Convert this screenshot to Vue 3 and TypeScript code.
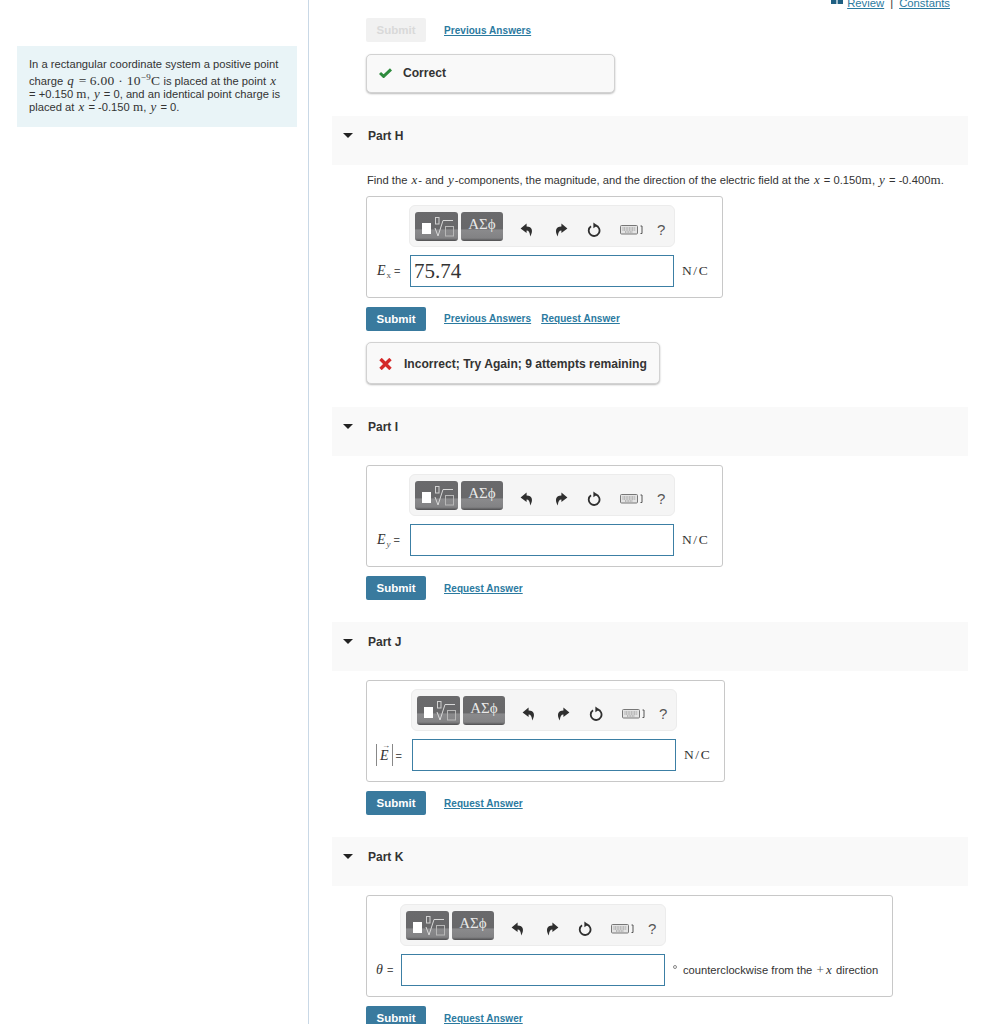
<template>
  <div class="page">
    <aside class="side">
      <div class="intro">
        <div>In a rectangular coordinate system a positive point</div>
        <div class="raised">charge <span class="mi">q</span><span class="m big eq">=</span><span class="m big">6.00 · 10<sup>−9</sup>C</span> is placed at the point <span class="mi">x</span></div>
        <div>= +0.150 <span class="m">m</span>, <span class="mi">y</span> = 0, and an identical point charge is</div>
        <div>placed at <span class="mi">x</span> = -0.150 <span class="m">m</span>, <span class="mi">y</span> = 0.</div>
      </div>
    </aside>

    <main class="main">
      <div class="top-links">
        <svg class="book" width="12" height="8" viewBox="0 0 12 8"><rect width="5.4" height="8" fill="#1f5f82" /><rect x="6.6" width="5.4" height="8" fill="#1f5f82" /></svg>
        <a class="plain">Review</a>
        <span class="sep">|</span>
        <a class="plain">Constants</a>
      </div>

      <div class="actions first">
        <button class="submit disabled">Submit</button>
        <a class="link">Previous Answers</a>
      </div>
      <div class="feedback ok">
        <svg width="13" height="10" viewBox="0 0 13 10"><path d="M1 5 L4.6 8.4 L12 1.4" fill="none" stroke="#2e8b3d" stroke-width="3" /></svg>
        <span>Correct</span>
      </div>

      <section v-for="part in parts" :key="part.name" class="part">
        <header class="part-head">
          <span class="caret"></span>
          <span class="part-name">Part {{ part.name }}</span>
        </header>

        <p v-if="part.name === 'H'" class="question">
          Find the <span class="mi">x</span>- and <span class="mi">y</span>-components, the magnitude, and the direction of the electric field at the
          <span class="mi">x</span> = 0.150<span class="m">m</span>, <span class="mi">y</span> = -0.400<span class="m">m</span>.
        </p>

        <div class="answer" :class="'kind-' + part.kind">
          <div class="toolbar">
            <div class="tool-btn">
              <svg width="43" height="29" viewBox="0 0 43 29">
                <rect x="7" y="11" width="9" height="11" fill="#fff" />
                <rect x="20.5" y="5.5" width="3.5" height="6.5" fill="none" stroke="#d0d0d0" />
                <path d="M20 16 L23 24 L28 8.5 L38 8.5" fill="none" stroke="#d8d8d8" />
                <rect x="30.5" y="14.5" width="8" height="9.5" fill="none" stroke="#b8b8b8" />
              </svg>
            </div>
            <div class="tool-btn greek">ΑΣϕ</div>
            <svg class="ico undo" width="14" height="14" viewBox="0 0 14 14"><path d="M6.6 0.5 L0.6 5.6 L6.6 10 V7.6 C8.8 7.6 9.8 9.6 10.2 13.5 C13.4 8 12.4 3.4 6.6 3.4 Z" fill="#2f2f2f" /></svg>
            <svg class="ico redo" width="14" height="14" viewBox="0 0 14 14"><path d="M7.4 0.5 L13.4 5.6 L7.4 10 V7.6 C5.2 7.6 4.2 9.6 3.8 13.5 C0.6 8 1.6 3.4 7.4 3.4 Z" fill="#2f2f2f" /></svg>
            <svg class="ico reset" width="14" height="16" viewBox="0 0 14 16"><path d="M8.6 3.4 A5.4 5.4 0 1 1 4 4.2" fill="none" stroke="#2f2f2f" stroke-width="1.8" /><path d="M6.4 0.4 L10.4 3.4 L6.4 6.2 Z" fill="#2f2f2f" /></svg>
            <svg class="ico keys" width="23" height="11" viewBox="0 0 23 11">
              <rect x="0.5" y="1.5" width="17" height="8.5" rx="1" fill="#e4e4e4" stroke="#777" />
              <path d="M2.5 4 H15.5 M2.5 6 H15.5 M5 8 H13" stroke="#8a8a8a" stroke-dasharray="1 .6" />
              <path d="M20.5 2 H22 V9.5 H20.5" fill="none" stroke="#555" />
            </svg>
            <span class="ico help">?</span>
          </div>

          <span class="label">
            <template v-if="part.kind === 'ex'"><span class="mi">E</span><sub class="sub">x</sub> =</template>
            <template v-else-if="part.kind === 'ey'"><span class="mi">E</span><sub class="sub it">y</sub> =</template>
            <template v-else-if="part.kind === 'mag'"><span class="bars"><span class="mi vec">E</span></span> =</template>
            <template v-else><span class="mi">θ</span> =</template>
          </span>
          <div class="input">{{ part.value }}</div>
          <span v-if="part.kind !== 'theta'" class="unit">N/C</span>
          <span v-else class="unit-text"><span class="deg"></span>counterclockwise from the <span class="m plus">+</span><span class="mi">x</span> direction</span>
        </div>

        <div class="actions">
          <button class="submit">Submit</button>
          <a v-if="part.previous" class="link">Previous Answers</a>
          <a class="link">Request Answer</a>
        </div>

        <div v-if="part.wrong" class="feedback bad">
          <svg width="13" height="12" viewBox="0 0 13 12"><path d="M1.5 1 L11.5 11 M11.5 1 L1.5 11" fill="none" stroke="#d42a2a" stroke-width="3.4" /></svg>
          <span>Incorrect; Try Again; 9 attempts remaining</span>
        </div>
      </section>
    </main>
  </div>
</template>

<script setup lang="ts">
interface Part {
  name: string;
  kind: 'ex' | 'ey' | 'mag' | 'theta';
  value?: string;
  previous?: boolean;
  wrong?: boolean;
}

const parts: Part[] = [
  { name: 'H', kind: 'ex', value: '75.74', previous: true, wrong: true },
  { name: 'I', kind: 'ey' },
  { name: 'J', kind: 'mag' },
  { name: 'K', kind: 'theta' },
];
</script>

<style>
html,
body {
  margin: 0;
  background: #fff;
}
</style>

<style scoped>
.page {
  display: flex;
  width: 998px;
  height: 1024px;
  overflow: hidden;
  font-family: "Liberation Sans", Arial, sans-serif;
  color: #333;
  background: #fff;
}

.side {
  box-sizing: border-box;
  flex: none;
  width: 309px;
  padding: 46px 11px 0 17px;
  border-right: 1px solid #c9d8e6;
}

.intro {
  box-sizing: border-box;
  height: 81px;
  padding: 11.5px 12px 0;
  background: #e9f4f7;
  font-size: 11.2px;
  line-height: 13px;
  white-space: nowrap;
}

.raised {
  padding-top: 4px;
}

.m {
  font-family: "Liberation Serif", "Times New Roman", serif;
  font-size: 13px;
  line-height: 0;
  letter-spacing: 0.3px;
}

.big {
  font-size: 13.5px;
}

.eq {
  margin: 0 3px 0 4px;
}

.plus {
  margin: 0 1px;
  color: #555;
}

.mi {
  margin: 0 1px;
  font-family: "Liberation Serif", "Times New Roman", serif;
  font-style: italic;
  font-size: 13px;
  line-height: 0;
}

sup {
  font-size: 9px;
  line-height: 0;
}

.sub {
  font-family: "Liberation Serif", "Times New Roman", serif;
  font-size: 9px;
  line-height: 0;
}

.it {
  font-style: italic;
}

.main {
  flex: none;
  width: 636px;
  margin-left: 23px;
}

.top-links {
  display: flex;
  justify-content: flex-end;
  align-items: center;
  gap: 4px;
  height: 6px;
  margin-bottom: 12px;
  padding-right: 18px;
  font-size: 11.3px;
  line-height: 6px;
}

.book {
  margin-top: -6px;
}

.plain {
  color: #2b7a9f;
  text-decoration: underline;
}

.sep {
  margin: 0 2px;
}

.actions {
  display: flex;
  align-items: center;
  height: 24.4px;
  margin: 8.6px 0 0 34px;
}

.actions.first {
  height: 24px;
  margin-top: 0;
}

.submit {
  box-sizing: border-box;
  width: 60px;
  height: 100%;
  margin-right: 18px;
  padding: 0;
  border: 0;
  border-radius: 2px;
  background: #397a9e;
  color: #fff;
  font: 700 11.5px "Liberation Sans", Arial, sans-serif;
}

.submit.disabled {
  background: #f1f1f1;
  color: #d9d9d9;
}

.link {
  margin-right: 10px;
  color: #2b7a9f;
  font-size: 10px;
  font-weight: 700;
  letter-spacing: 0.05px;
  text-decoration: underline;
}

.feedback {
  box-sizing: border-box;
  display: flex;
  align-items: center;
  width: fit-content;
  margin-left: 34px;
  border: 1px solid #d2d2d2;
  border-radius: 5px;
  background: #f9f9f9;
  box-shadow: 0 1px 2px #bbb;
  font-size: 12.1px;
  font-weight: 700;
}

.feedback.ok {
  gap: 11px;
  width: 249px;
  height: 39px;
  margin-top: 12px;
  margin-bottom: 23px;
  padding: 0 0 2px 12px;
}

.feedback.bad {
  gap: 12px;
  height: 42px;
  margin-top: 11px;
  margin-bottom: 1.2px;
  padding: 1px 12px 0;
}

.part {
  padding-bottom: 21.8px;
}

.part-head {
  box-sizing: border-box;
  display: flex;
  align-items: center;
  height: 48.6px;
  padding: 0 0 9px 11px;
  background: #f9f9f9;
}

.caret {
  width: 0;
  height: 0;
  margin-right: 15px;
  border-style: solid;
  border-width: 5px 5px 0;
  border-color: #222 transparent transparent;
}

.part-name {
  font-size: 12px;
  font-weight: 700;
}

.question {
  height: 14px;
  margin: 8px 0 0 35px;
  font-size: 11.2px;
  line-height: 14px;
  white-space: nowrap;
}

.answer {
  box-sizing: border-box;
  display: grid;
  grid-template-columns: 27px 264px auto;
  grid-template-rows: 42px 32px;
  column-gap: 6px;
  row-gap: 8px;
  align-items: center;
  width: fit-content;
  height: 102px;
  margin: 9.6px 0 0 34px;
  padding: 8px 12px 0 10px;
  border: 1px solid #c8c8c8;
  border-radius: 3px;
}

.answer.kind-mag {
  grid-template-columns: 29px 264px auto;
}

.answer.kind-theta {
  grid-template-columns: 19px 264px auto;
  padding-left: 9px;
}

.toolbar {
  box-sizing: border-box;
  grid-column: 2;
  display: flex;
  align-items: center;
  width: 266px;
  height: 42px;
  margin-left: -1px;
  padding-left: 5px;
  border: 1px solid #ececec;
  border-radius: 6px;
  background: #f5f5f5;
}

.tool-btn {
  box-sizing: border-box;
  display: flex;
  align-items: center;
  justify-content: center;
  width: 43px;
  height: 29px;
  border-radius: 3px;
  background: linear-gradient(#6a6a6c 0, #68686a 58%, #8a8a8c 62%, #828284 90%, #4e4e50 100%);
}

.greek {
  width: 42px;
  margin-left: 3px;
  padding-bottom: 3px;
  color: #e9e9e9;
  font: 15px "Liberation Serif", serif;
}

.ico {
  flex: none;
  margin-top: 7px;
}

.undo {
  margin-left: 17px;
}

.redo {
  margin-left: 20px;
}

.reset {
  margin-left: 19px;
}

.keys {
  margin-left: 19px;
}

.help {
  margin-left: 14px;
  color: #555;
  font-size: 15px;
}

.label {
  grid-column: 1;
  margin-left: -1px;
  color: #555;
  font-size: 11px;
  white-space: nowrap;
}

.label .mi {
  color: #333;
  font-size: 14px;
}

.bars {
  display: inline-block;
  padding: 5px 2px 3px;
  border-right: 1px solid #888;
  border-left: 1px solid #888;
  line-height: 14px;
}

.vec {
  position: relative;
}

.vec::before {
  content: "→";
  position: absolute;
  top: -9px;
  left: 2px;
  font-size: 8px;
  font-style: normal;
  line-height: 14px;
}

.input {
  box-sizing: border-box;
  height: 32px;
  padding-left: 3px;
  border: 1px solid #3c7fa4;
  font: 21px/30px "Liberation Serif", serif;
  color: #333;
}

.unit {
  width: 28px;
  margin-left: 2px;
  font: 13.5px "Liberation Serif", serif;
  letter-spacing: 1.6px;
  white-space: nowrap;
}

.unit-text {
  width: 207px;
  margin-left: 2px;
  font-size: 11.2px;
  white-space: nowrap;
}

.deg {
  display: inline-block;
  box-sizing: border-box;
  width: 4px;
  height: 4px;
  margin-right: 6px;
  border: 1px solid #888;
  border-radius: 50%;
  vertical-align: 5px;
}
</style>
